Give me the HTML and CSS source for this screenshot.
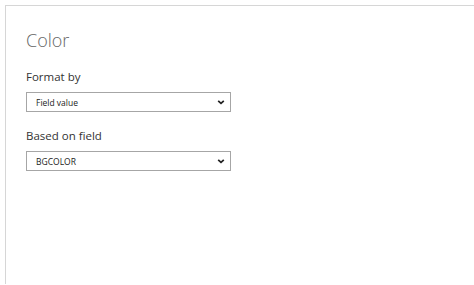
FILE: index.html
```html
<!DOCTYPE html>
<html>
<head>
<meta charset="utf-8">
<link rel="stylesheet" href="styles.css">
</head>
<body>
<div class="panel">
  <div class="title">Color</div>
  <div class="field">
    <div class="label">Format by</div>
    <div class="select">
      <span class="value">Field value</span>
      <svg class="chev" width="8" height="6" viewBox="0 0 8 6"><path d="M1.2 1.8 L4 4.4 L6.8 1.8" fill="none" stroke="#222" stroke-width="1.7"/></svg>
    </div>
  </div>
  <div class="field">
    <div class="label">Based on field</div>
    <div class="select">
      <span class="value">BGCOLOR</span>
      <svg class="chev" width="8" height="6" viewBox="0 0 8 6"><path d="M1.2 1.8 L4 4.4 L6.8 1.8" fill="none" stroke="#222" stroke-width="1.7"/></svg>
    </div>
  </div>
</div>
</body>
</html>
```
FILE: styles.css
```css
html, body {
  margin: 0;
  padding: 0;
  background: #ffffff;
}
body {
  font-family: "Open Sans", "Liberation Sans", sans-serif;
  width: 474px;
  height: 285px;
  overflow: hidden;
}
.panel {
  margin: 5px 0 0 5px;
  height: 279px;
  border-top: 1px solid #d6d6d6;
  border-left: 1px solid #d6d6d6;
  padding: 21px 0 0 20px;
  box-sizing: border-box;
  display: flex;
  flex-direction: column;
}
.title {
  font-size: 18px;
  font-weight: 300;
  color: #666666;
  line-height: 26px;
  margin-bottom: 15px;
}
.field {
  display: flex;
  flex-direction: column;
  margin-bottom: 15px;
}
.label {
  font-size: 11.5px;
  color: #333333;
  line-height: 17px;
  margin-bottom: 7px;
}
.select {
  width: 205px;
  height: 20px;
  box-sizing: border-box;
  border: 1px solid #a6a6a6;
  display: flex;
  align-items: center;
  justify-content: space-between;
  padding: 0 5px 0 9px;
}
.value {
  font-size: 8.5px;
  color: #222222;
}
.chev {
  display: block;
}
```
